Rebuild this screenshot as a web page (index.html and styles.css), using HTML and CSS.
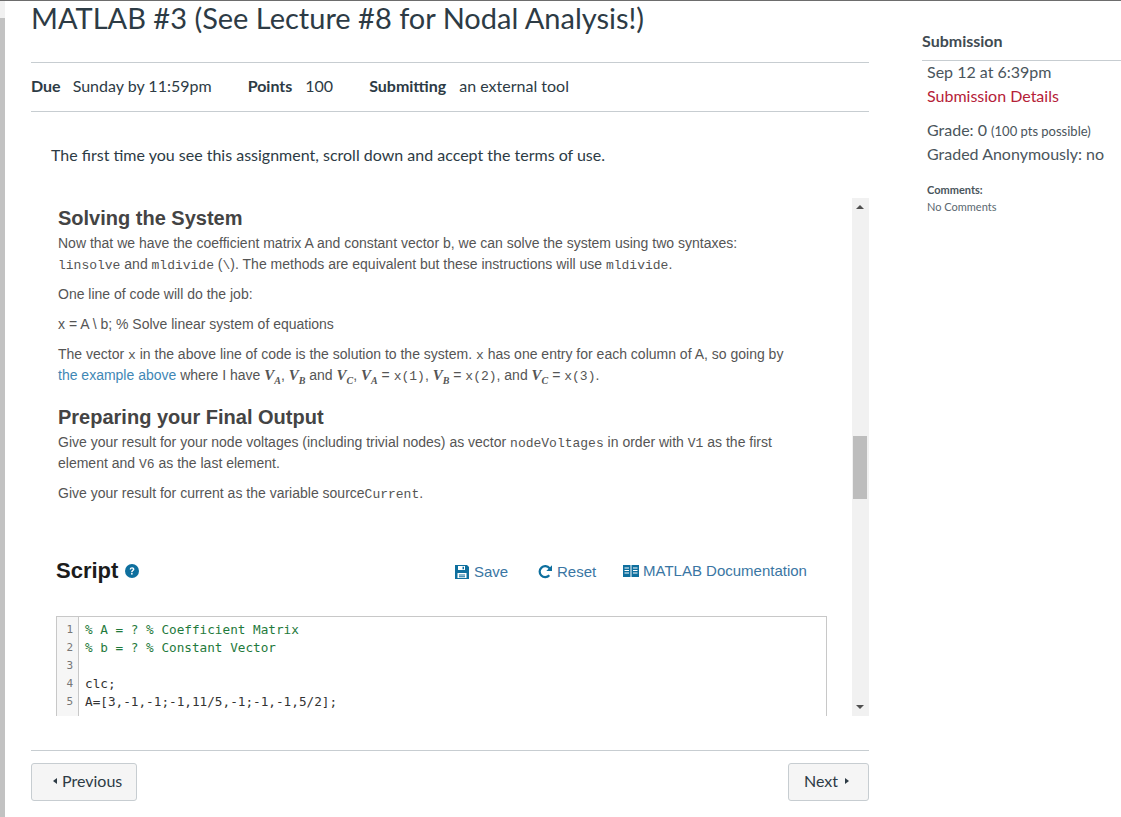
FILE: index.html
```html
<!DOCTYPE html>
<html lang="en">
<head>
<meta charset="utf-8">
<title>MATLAB #3</title>
<link rel="stylesheet" href="styles.css">
</head>
<body>
<div class="rail"></div>
<main class="main">
  <h1 class="title">MATLAB #3 (See Lecture #8 for Nodal Analysis!)</h1>
  <div class="details">
    <span class="detail detail-due"><b>Due</b><span>Sunday by 11:59pm</span></span>
    <span class="detail detail-points"><b>Points</b><span>100</span></span>
    <span class="detail detail-sub"><b>Submitting</b><span>an external tool</span></span>
  </div>
  <p class="notice">The first time you see this assignment, scroll down and accept the terms of use.</p>
  <div class="frame">
    <div class="frame-content">
      <h2 class="doc-h">Solving the System</h2>
      <p class="doc-p">Now that we have the coefficient matrix A and constant vector b, we can solve the system using two syntaxes:<br><code>linsolve</code> and <code>mldivide</code> (<code>\</code>). The methods are equivalent but these instructions will use <code>mldivide</code>.</p>
      <p class="doc-p">One line of code will do the job:</p>
      <p class="doc-p">x = A \ b; % Solve linear system of equations</p>
      <p class="doc-p">The vector <code>x</code> in the above line of code is the solution to the system. <code>x</code> has one entry for each column of A, so going by<br><a class="doc-link" href="#">the example above</a> where I have <i class="math">V<sub>A</sub></i>, <i class="math">V<sub>B</sub></i> and <i class="math">V<sub>C</sub></i>, <i class="math">V<sub>A</sub></i> = <code>x(1)</code>, <i class="math">V<sub>B</sub></i> = <code>x(2)</code>, and <i class="math">V<sub>C</sub></i> = <code>x(3)</code>.</p>
      <h2 class="doc-h doc-h-second">Preparing your Final Output</h2>
      <p class="doc-p">Give your result for your node voltages (including trivial nodes) as vector <code>nodeVoltages</code> in order with <code>V1</code> as the first<br>element and <code>V6</code> as the last element.</p>
      <p class="doc-p">Give your result for current as the variable source<code>Current</code>.</p>
      <div class="script-head">
        <h3 class="script-title">Script
          <svg class="help" viewBox="0 0 14 14" aria-hidden="true"><circle cx="7" cy="7" r="7" fill="#0e6f9e"/><path d="M4.7 5.400C4.800 4 5.800 3.300 7.100 3.300c1.300 0 2.300.8 2.300 1.900 0 1.700-1.900 1.600-1.900 3H6.100c0-2 1.800-2 1.800-3 0-.5-.4-.8-.9-.8-.6 0-.9.4-1 1z" fill="#fff"/><rect x="6.100" y="9" width="1.500" height="1.600" fill="#fff"/></svg>
        </h3>
        <a class="tool tool-save" href="#"><svg viewBox="0 0 16 16" aria-hidden="true"><path fill-rule="evenodd" d="M1 1h12l2 2v12H1zM4 2v4h7V2zM8.500 2.700h1.500v2.600H8.500zM3.500 9v5h9V9zM5 10.500h6v1H5zM5 12.300h6v1H5z" fill="#0e6f9e"/></svg>Save</a>
        <a class="tool tool-reset" href="#"><svg viewBox="0 0 16 16" aria-hidden="true"><path d="M12.300 11.300A5.500 5.500 0 1 1 12.500 4.300" fill="none" stroke="#0e6f9e" stroke-width="2.200"/><path d="M15 1.200V7H9.300z" fill="#0e6f9e"/></svg>Reset</a>
        <a class="tool tool-doc" href="#"><svg viewBox="0 0 16 14" aria-hidden="true"><path fill-rule="evenodd" d="M0 1h7.500v12H0zM8.500 1H16v12H8.500zM1.500 3.500v1h4.500v-1zM1.500 6v1h4.500V6zM1.500 8.500v1h4.500v-1zM10 3.500v1h4.500v-1zM10 6v1h4.500V6zM10 8.500v1h4.500v-1z" fill="#0e6f9e"/></svg>MATLAB Documentation</a>
      </div>
      <div class="editor">
        <div class="gutter"><span>1</span><span>2</span><span>3</span><span>4</span><span>5</span></div>
        <pre class="code"><span class="cmt">% A = ? % Coefficient Matrix</span>
<span class="cmt">% b = ? % Constant Vector</span>

clc;
A=[3,-1,-1;-1,11/5,-1;-1,-1,5/2];</pre>
      </div>
    </div>
    <div class="scrollbar">
      <div class="arrow arrow-up"></div>
      <div class="thumb"></div>
      <div class="arrow arrow-down"></div>
    </div>
  </div>
  <nav class="pager">
    <a class="btn btn-prev" href="#"><span class="tri tri-left"></span>Previous</a>
    <a class="btn btn-next" href="#">Next<span class="tri tri-right"></span></a>
  </nav>
</main>
<aside class="side">
  <h2 class="side-h">Submission</h2>
  <div class="side-body">
    <div class="side-date">Sep 12 at 6:39pm</div>
    <a class="side-link" href="#">Submission Details</a>
    <div class="side-grade">Grade: 0 <small>(100 pts possible)</small></div>
    <div class="side-anon">Graded Anonymously: no</div>
    <div class="side-c-h">Comments:</div>
    <div class="side-c">No Comments</div>
  </div>
</aside>
</body>
</html>
```
FILE: styles.css
```css
* { box-sizing: border-box; }
html, body { margin: 0; height: 100%; overflow: hidden; }
body {
  display: flex;
  height: 817px;
  border-top: 1px solid #6d6d6d;
  font-family: Lato, "Liberation Sans", sans-serif;
  color: #2d3b45;
  background: #fff;
}
.rail { width: 5px; border-top: 17px solid #f1f1f1; background: #c2c2c2; flex: none; }
.main { width: 838px; margin-left: 26px; flex: none; }
.title {
  margin: 0;
  height: 61px;
  font-size: 29px;
  line-height: 34px;
  font-weight: 400;
}
.details {
  display: flex;
  align-items: center;
  height: 50px;
  padding-bottom: 4px;
  border-top: 1px solid #c7cdd1;
  border-bottom: 1px solid #c7cdd1;
  font-size: 16px;
}
.detail b { font-weight: 700; margin-right: 12px; }
.detail-points b { margin-right: 13px; }
.detail-sub b { margin-right: 13px; }
.detail-due { margin-right: 36px; }
.detail-points { margin-right: 36px; }
.notice { margin: 0; padding: 33px 0 0 20px; height: 86px; font-size: 16px; line-height: 20px; }
.frame { position: relative; height: 518px; overflow: hidden; }
.frame-content {
  padding-left: 27px;
  font-family: "Liberation Sans", sans-serif;
  font-size: 14px;
  line-height: 21px;
  color: #555;
}
.doc-h { margin: 0; padding-top: 8px; font-size: 20px; line-height: 24px; font-weight: 700; color: #444; }
.doc-h-second { padding-top: 0; margin-top: 19px; }
.doc-p { margin: 4px 0 9px; }
.doc-h + .doc-p { margin-top: 3px; }
code { font-family: "Liberation Mono", monospace; font-size: 13px; line-height: 0; }
.doc-link { color: #3f87b5; text-decoration: none; }
.math { font-family: "Liberation Serif", serif; font-size: 15px; font-weight: 700; line-height: 0; color: #555; }
.math sub { font-size: 10px; line-height: 0; }
.script-head { display: flex; align-items: flex-start; height: 60px; margin: 52px 0 0 -2px; }
.script-title { margin: 0; width: 398px; display: flex; align-items: center; gap: 7px; font-size: 22px; line-height: 30px; font-weight: 700; color: #1c1c1c; }
.help { width: 14px; height: 14px; }
.tool { display: flex; align-items: center; gap: 4px; padding-top: 6px; font-size: 15px; line-height: 20px; color: #3a76a3; text-decoration: none; }
.tool svg { width: 16px; height: 16px; flex: none; }
.tool-save { width: 83px; }
.tool-reset { width: 86px; }
.tool-doc { padding-top: 5px; }
.editor {
  display: flex;
  width: 771px;
  margin-left: -2px;
  height: 100px;
  border: 1px solid #c8c8c8;
  border-bottom: 0;
  font-family: "DejaVu Sans Mono", monospace;
  font-size: 12.700px;
  line-height: 18px;
  color: #333;
}
.gutter {
  display: flex;
  flex-direction: column;
  width: 22px;
  padding: 4px 5px 0 0;
  border-right: 1px solid #c8c8c8;
  background: #f6f6f6;
  text-align: right;
  font-size: 11px;
  color: #777;
}
.code { margin: 0; padding: 4px 0 0 6px; font: inherit; }
.cmt { color: #1f7a3c; }
.scrollbar {
  position: absolute;
  top: 0;
  right: 0;
  width: 17px;
  height: 518px;
  background: #f1f1f1;
}
.arrow { position: absolute; left: 4px; width: 0; height: 0; border-left: 4px solid transparent; border-right: 4px solid transparent; }
.arrow-up { top: 7px; border-bottom: 4px solid #505050; }
.arrow-down { bottom: 7px; border-top: 4px solid #505050; }
.thumb { position: absolute; top: 238px; left: 1px; width: 14px; height: 63px; background: #bdbdbd; }
.pager {
  display: flex;
  justify-content: space-between;
  align-items: flex-start;
  height: 66px;
  margin-top: 34px;
  padding-top: 12px;
  border-top: 1px solid #c7cdd1;
}
.btn {
  display: flex;
  align-items: center;
  height: 38px;
  padding-bottom: 3px;
  border: 1px solid #c7cdd1;
  border-radius: 3px;
  background: #f5f5f5;
  font-size: 16px;
  color: #2d3b45;
  text-decoration: none;
}
.btn-prev { padding-left: 21px; padding-right: 14px; }
.btn-next { padding-left: 15px; padding-right: 19px; }
.tri { width: 0; height: 0; border-top: 3.500px solid transparent; border-bottom: 3.500px solid transparent; }
.tri-left { border-right: 4px solid #2d3b45; margin-right: 5px; }
.tri-right { border-left: 4px solid #2d3b45; margin-left: 7px; }
.side { margin-left: 53px; flex: 1; padding-top: 29px; }
.side-h { margin: 0; height: 31px; border-bottom: 1px solid #c7cdd1; font-size: 16px; line-height: 22px; font-weight: 700; color: #414b52; }
.side-body { padding-left: 5px; font-size: 16px; line-height: 24px; color: #4a555c; }
.side-date { line-height: 22px; }
.side-link { display: block; margin-top: 1px; color: #b52138; text-decoration: none; }
.side-grade { margin-top: 10px; }
.side-grade small { font-size: 13px; line-height: 0; }
.side-c-h { margin-top: 15px; font-size: 11px; line-height: 17px; font-weight: 700; }
.side-c { font-size: 11px; line-height: 18px; color: #5b6870; }
```
